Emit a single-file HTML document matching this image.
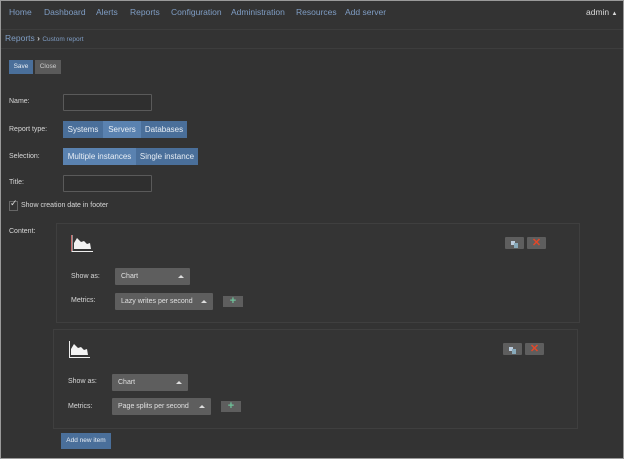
<!DOCTYPE html>
<html><head><meta charset="utf-8"><style>
body{margin:0;width:624px;height:459px;background:#333;font-family:"Liberation Sans",sans-serif;overflow:hidden;position:relative}
.fr{position:absolute;left:0;top:0;width:622px;height:457px;border:1px solid #9a9a9a}
.a{position:absolute;white-space:nowrap}
.nav{top:7px;font-size:8.5px;color:#7f9dc4}
.lbl{font-size:7px;color:#d8d8d8}
.inp{position:absolute;border:1px solid #5a5a5a;background:#2f2f2f;border-radius:1px}
.btn{position:absolute;background:#4a6f9a;color:#e8eef5;font-size:8px;text-align:center}
.sel{position:absolute;background:#5e5e5e;color:#e0e0e0;font-size:7px;line-height:17px;padding-left:6px;box-sizing:border-box;border-radius:1px}
.sel:after{content:"";position:absolute;right:6px;top:7px;border:3px solid transparent;border-bottom:3px solid #ddd;border-top:0}
.pnl{position:absolute;border:1px solid #3f3f3f;background:#343434}
.ib{position:absolute;width:19px;height:12px;background:#5e5e5e;border-radius:1px}
.pl{position:absolute;width:20px;height:11px;background:#5e5e5e;color:#6fc29a;font-size:11px;font-weight:bold;line-height:11px;text-align:center}
</style></head><body>
<div class="fr"></div>
<div class="a nav" style="left:9px">Home</div>
<div class="a nav" style="left:44px">Dashboard</div>
<div class="a nav" style="left:96px">Alerts</div>
<div class="a nav" style="left:130px">Reports</div>
<div class="a nav" style="left:171px">Configuration</div>
<div class="a nav" style="left:231px">Administration</div>
<div class="a nav" style="left:296px">Resources</div>
<div class="a nav" style="left:345px">Add server</div>
<div class="a nav" style="left:586px;color:#d8d8d8">admin <span style="font-size:6px">▲</span></div>
<div class="a" style="left:1px;top:29px;width:622px;height:1px;background:#3d3d3d"></div>
<div class="a" style="left:5px;top:33px;font-size:8.5px;color:#7f9dc4">Reports <span style="color:#ccc;font-weight:bold">›</span> <span style="font-size:6.5px">Custom report</span></div>
<div class="a" style="left:1px;top:48px;width:622px;height:1px;background:#3d3d3d"></div>
<div class="btn" style="left:9px;top:60px;width:24px;height:14px;line-height:14px;font-size:6.5px">Save</div>
<div class="btn" style="left:35px;top:60px;width:26px;height:14px;line-height:14px;font-size:6.5px;background:#5a5a5a;color:#ccc">Close</div>
<div class="a lbl" style="left:9px;top:98px">Name:</div>
<div class="inp" style="left:63px;top:94px;width:87px;height:15px"></div>
<div class="a lbl" style="left:9px;top:126px">Report type:</div>
<div class="btn" style="left:63px;top:121px;width:40px;height:17px;line-height:17px">Systems</div>
<div class="btn" style="left:103px;top:121px;width:38px;height:17px;line-height:17px;background:#5a82b0">Servers</div>
<div class="btn" style="left:141px;top:121px;width:46px;height:17px;line-height:17px">Databases</div>
<div class="a lbl" style="left:9px;top:153px">Selection:</div>
<div class="btn" style="left:63px;top:148px;width:73px;height:17px;line-height:17px;background:#5a82b0">Multiple instances</div>
<div class="btn" style="left:136px;top:148px;width:62px;height:17px;line-height:17px">Single instance</div>
<div class="a lbl" style="left:9px;top:179px">Title:</div>
<div class="inp" style="left:63px;top:175px;width:87px;height:15px"></div>
<div class="a" style="left:9px;top:201px;width:7px;height:8px;border:1px solid #666"></div>
<div class="a" style="left:10px;top:198px;font-size:9px;color:#ddd">✓</div>
<div class="a lbl" style="left:21px;top:202px">Show creation date in footer</div>
<div class="a lbl" style="left:9px;top:228px">Content:</div>

<div class="pnl" style="left:56px;top:223px;width:522px;height:98px"></div>
<svg class="a" style="left:71px;top:235px" width="22" height="18"><path d="M1 0V16.5H22" stroke="#eee" stroke-width="1" fill="none"/><path d="M0.5 0V16" stroke="#c96a6a" stroke-width="1"/><path d="M3 14L3 8L6 3L10 7L13 6L16 9L19 8L20 14Z" fill="#f2f2f2"/></svg>
<div class="ib" style="left:505px;top:237px"><svg width="19" height="12"><rect x="6" y="3" width="4" height="4" fill="#bcd"/><rect x="9" y="5" width="4" height="5" fill="#8ab"/></svg></div>
<div class="ib" style="left:527px;top:237px;color:#e0482a;font-size:11px;line-height:12px;text-align:center;font-weight:bold">✕</div>
<div class="a lbl" style="left:71px;top:273px">Show as:</div>
<div class="sel" style="left:115px;top:268px;width:75px;height:17px">Chart</div>
<div class="a lbl" style="left:71px;top:297px">Metrics:</div>
<div class="sel" style="left:115px;top:293px;width:98px;height:17px">Lazy writes per second</div>
<div class="pl" style="left:223px;top:296px">+</div>

<div class="pnl" style="left:53px;top:329px;width:523px;height:98px"></div>
<svg class="a" style="left:68px;top:341px" width="22" height="18"><path d="M1.5 0V16.5H22" stroke="#eee" stroke-width="1" fill="none"/><path d="M3 14L3 8L6 3L10 7L13 6L16 9L19 8L20 14Z" fill="#f2f2f2"/></svg>
<div class="ib" style="left:503px;top:343px"><svg width="19" height="12"><rect x="6" y="3" width="4" height="4" fill="#bcd"/><rect x="9" y="5" width="4" height="5" fill="#8ab"/></svg></div>
<div class="ib" style="left:525px;top:343px;color:#e0482a;font-size:11px;line-height:12px;text-align:center;font-weight:bold">✕</div>
<div class="a lbl" style="left:68px;top:378px">Show as:</div>
<div class="sel" style="left:112px;top:374px;width:76px;height:17px">Chart</div>
<div class="a lbl" style="left:68px;top:403px">Metrics:</div>
<div class="sel" style="left:112px;top:398px;width:99px;height:17px">Page splits per second</div>
<div class="pl" style="left:221px;top:401px">+</div>

<div class="btn" style="left:61px;top:433px;width:50px;height:16px;line-height:16px;font-size:6.5px">Add new item</div>
</body></html>
